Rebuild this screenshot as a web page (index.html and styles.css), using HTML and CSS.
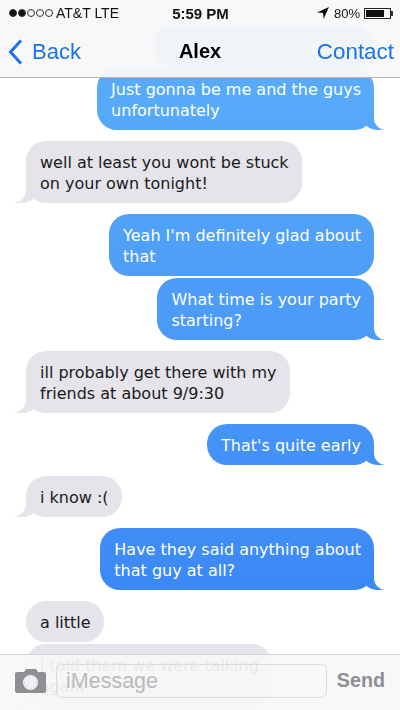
FILE: index.html
```html
<!DOCTYPE html>
<html lang="en">
<head>
    <meta charset="utf-8">
    <title>Alex</title>
    <link rel="stylesheet" href="styles.css">
</head>
<body>
    <div class="phone">
        <div class="thread">
            <div class="msg out">Maybe it's not lip it is so</div>
            <div class="msg out tail near">Just gonna be me and the guys<br>unfortunately</div>
            <div class="msg in tail">well at least you wont be stuck<br>on your own tonight!</div>
            <div class="msg out">Yeah I'm definitely glad about<br>that</div>
            <div class="msg out tail near">What time is your party<br>starting?</div>
            <div class="msg in tail">ill probably get there with my<br>friends at about 9/9:30</div>
            <div class="msg out tail">That's quite early</div>
            <div class="msg in tail">i know :(</div>
            <div class="msg out tail">Have they said anything about<br>that guy at all?</div>
            <div class="msg in">a little</div>
            <div class="msg in tail near">i told them we were talking<br>again</div>
        </div>

        <div class="topbar">
            <div class="status">
                <div class="status-left">
                    <span class="dot full"></span><span class="dot full"></span><span class="dot"></span><span class="dot"></span><span class="dot"></span>
                    <span class="carrier">AT&amp;T LTE</span>
                </div>
                <div class="clock">5:59 PM</div>
                <div class="status-right">
                    <svg class="arrow" width="12" height="12" viewBox="0 0 11 11"><path d="M11 0 L0 5 L5.5 5.5 L6 11 Z" fill="#111"/></svg>
                    <span>80%</span>
                    <div class="battery"><div class="charge"></div></div>
                </div>
            </div>
            <div class="nav">
                <div class="back">
                    <svg width="15" height="26" viewBox="0 0 15 26"><path d="M13 1.5 L2.5 13 L13 24.5" fill="none" stroke="#1a73ea" stroke-width="3"/></svg>
                    <span>Back</span>
                </div>
                <div class="title">Alex</div>
                <div class="contact">Contact</div>
            </div>
        </div>

        <div class="composer">
            <svg class="camera" width="31" height="24" viewBox="0 0 31 24">
                <path fill-rule="evenodd" fill="#8e8e93" d="M2 3 H9 L11 0 H21 L23 3 H29 Q31 3 31 5 V22 Q31 24 29 24 H2 Q0 24 0 22 V5 Q0 3 2 3 Z M15.5 6 A7.5 7.5 0 1 0 15.5 21 A7.5 7.5 0 1 0 15.5 6 Z M15.5 7.5 A6 6 0 1 1 15.5 19.5 A6 6 0 1 1 15.5 7.5 Z"/>
                <circle cx="15.5" cy="13.5" r="6" fill="#f1f1f3"/>
            </svg>
            <div class="field">iMessage</div>
            <div class="send">Send</div>
        </div>
    </div>
</body>
</html>
```

FILE: styles.css
```css
body {
    margin: 0;
    background: #fff;
}

.phone {
    position: relative;
    width: 400px;
    height: 710px;
    overflow: hidden;
    font-family: "Liberation Sans", Arial, sans-serif;
}

/* messages */
.thread {
    display: flex;
    flex-direction: column;
    padding: 25px 26px 0;
    font: 16px/21px "DejaVu Sans", Verdana, sans-serif;
}

.msg {
    position: relative;
    width: fit-content;
    padding: 11px 13px 9px 14px;
    border-radius: 20px;
    margin-bottom: 11px;
    white-space: nowrap;
}

.msg:has(+ .near) {
    margin-bottom: 2px;
}

.out {
    align-self: flex-end;
    color: #fff;
    background: linear-gradient(#5db0fa, #3581f5) fixed;
}

.in {
    align-self: flex-start;
    color: #1a1a1a;
    background: #e5e4ea;
}

/* bubble tails */
.tail::before,
.tail::after {
    content: "";
    position: absolute;
    bottom: 0;
    height: 22px;
}

.out.tail::before {
    right: -10px;
    width: 22px;
    background: inherit;
    border-bottom-left-radius: 16px 14px;
}

.out.tail::after {
    right: -26px;
    width: 26px;
    background: #fff;
    border-bottom-left-radius: 12px;
}

.in.tail::before {
    left: -15px;
    width: 27px;
    background: inherit;
    border-bottom-right-radius: 16px 14px;
}

.in.tail::after {
    left: -30px;
    width: 30px;
    background: #fff;
    border-bottom-right-radius: 15px 13px;
}

/* header over the thread */
.topbar {
    position: absolute;
    top: 0;
    left: 0;
    width: 100%;
    height: 77px;
    background: rgba(248, 248, 248, 0.95);
    backdrop-filter: blur(1.5px);
    border-bottom: 1px solid #b5b5b5;
    color: #111;
}

.status {
    display: grid;
    grid-template-columns: 1fr auto 1fr;
    align-items: center;
    height: 26px;
    padding: 0 8px 0 9px;
    font-size: 14px;
}

.status-left {
    display: flex;
    align-items: center;
    gap: 1px;
}

.dot {
    width: 8px;
    height: 8px;
    box-sizing: border-box;
    border: 1px solid #333;
    border-radius: 50%;
}

.dot.full {
    background: #111;
}

.carrier {
    margin-left: 2px;
}

.clock {
    font-size: 15px;
    font-weight: bold;
}

.status-right {
    display: flex;
    align-items: center;
    justify-content: flex-end;
    gap: 4px;
    font-size: 13px;
}

.arrow {
    margin-right: 1px;
}

.battery {
    position: relative;
    width: 27px;
    height: 11px;
    box-sizing: border-box;
    border: 1px solid #222;
    padding: 1px;
    margin-right: 1px;
}

.battery::after {
    content: "";
    position: absolute;
    top: 2px;
    right: -3px;
    width: 2px;
    height: 5px;
    background: #333;
}

.charge {
    width: 80%;
    height: 100%;
    background: #111;
}

.nav {
    display: grid;
    grid-template-columns: 1fr auto 1fr;
    align-items: center;
    height: 51px;
    padding: 0 6px 0 8px;
    font-size: 22px;
    color: #1a73ea;
}

.back {
    display: flex;
    align-items: center;
    gap: 9px;
}

.title {
    font-size: 20px;
    font-weight: bold;
    color: #000;
    margin-right: 2px;
}

.contact {
    text-align: right;
    font-size: 22.4px;
}

/* message box */
.composer {
    position: absolute;
    left: 0;
    bottom: 0;
    box-sizing: border-box;
    width: 100%;
    height: 56px;
    display: flex;
    align-items: center;
    padding: 0 15px 4px 15px;
    background: rgba(247, 247, 248, 0.93);
    border-top: 1px solid #d5d5d8;
}

.camera {
    flex: none;
    margin-right: 10px;
}

.field {
    flex: 1;
    height: 34px;
    box-sizing: border-box;
    padding-left: 9px;
    border: 1px solid #dcdcdf;
    border-radius: 6px;
    font-size: 21.5px;
    line-height: 33px;
    color: #b9b9bd;
}

.send {
    margin-left: 10px;
    font-size: 19.7px;
    font-weight: bold;
    color: #8e8e93;
}
```
